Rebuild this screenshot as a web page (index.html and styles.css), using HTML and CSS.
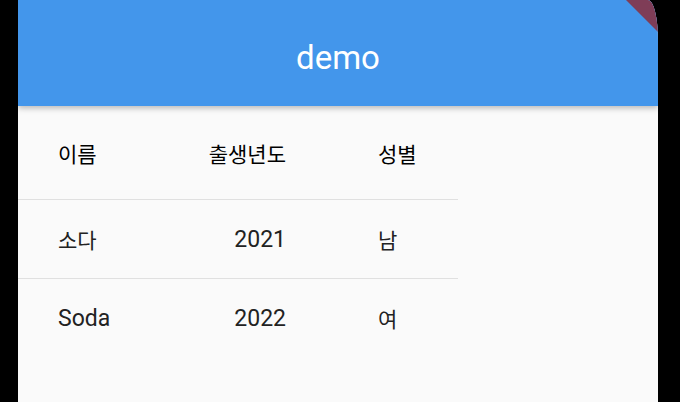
FILE: index.html
```html
<!DOCTYPE html>
<html lang="ko">
<head>
    <meta charset="UTF-8">
    <meta name="viewport" content="width=device-width, initial-scale=1.0">
    <title>demo</title>
    <link rel="stylesheet" href="styles.css">
</head>
<body>

    <div class="screen">
        <header class="app-bar">
            <h1>demo</h1>
            <div class="debug-banner"></div>
        </header>

        <div class="table">
            <div class="row head">
                <span class="ko">이름</span>
                <span class="ko num">출생년도</span>
                <span class="ko">성별</span>
            </div>
            <div class="row">
                <span class="ko">소다</span>
                <span class="num">2021</span>
                <span class="ko">남</span>
            </div>
            <div class="row last">
                <span>Soda</span>
                <span class="num">2022</span>
                <span class="ko">여</span>
            </div>
        </div>
    </div>

</body>
</html>
```

FILE: styles.css
```css
body {
    margin: 0;
    background: #000;
    font-family: Roboto, "Noto Sans CJK KR", sans-serif;
    overflow: hidden;
}

.screen {
    margin: 0 22px 0 18px;
    height: 402px;
    background: #fafafa;
    border-top-right-radius: 10px 40px;
    overflow: hidden;
}

.app-bar {
    position: relative;
    height: 106px;
    box-sizing: border-box;
    padding-top: 41px;
    background: #4396eb;
    box-shadow: 0 2px 6px rgba(0, 0, 0, 0.28);
    overflow: hidden;
}

.app-bar h1 {
    margin: 0;
    text-align: center;
    color: #fff;
    font-size: 33px;
    font-weight: 400;
    line-height: 33px;
}

/* corner of the debug banner, cut by the screen edge */
.debug-banner {
    position: absolute;
    top: 0;
    right: 0;
    width: 32px;
    height: 32px;
    background: #7f3d57;
    clip-path: polygon(0 0, 100% 0, 100% 100%);
}

.table {
    width: 440px;
}

.row {
    display: grid;
    grid-template-columns: 56px 80px 40px;
    column-gap: 92px;
    align-items: center;
    padding: 0 40px;
    height: 79px;
    box-sizing: border-box;
    border-bottom: 1px solid #e0e0e0;
    font-size: 23px;
    color: #222;
}

.row.head {
    height: 94px;
    color: #000;
}

.row.last {
    height: 78px;
    border-bottom: none;
}

.ko {
    font-size: 21px;
}

.num {
    justify-self: end;
}
```
